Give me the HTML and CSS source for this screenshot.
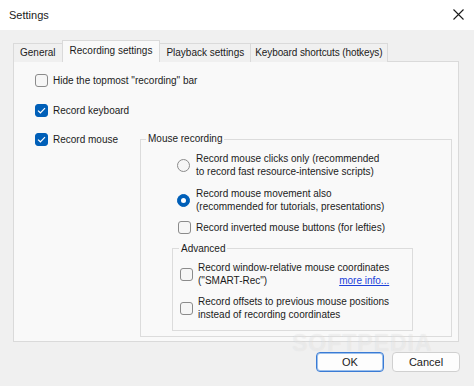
FILE: index.html
```html
<!DOCTYPE html>
<html>
<head>
<meta charset="utf-8">
<link rel="stylesheet" href="styles.css">
</head>
<body>
<div class="window">
  <div class="titlebar">
    <span class="title">Settings</span>
    <svg class="close" width="11" height="11" viewBox="0 0 11 11"><path d="M0.5 0.5 L10.5 10.5 M10.5 0.5 L0.5 10.5" stroke="#1a1a1a" stroke-width="1.1" fill="none"/></svg>
  </div>
  <div class="main">
    <div class="tabs">
      <div class="tab">General</div>
      <div class="tab active">Recording settings</div>
      <div class="tab">Playback settings</div>
      <div class="tab last">Keyboard shortcuts (hotkeys)</div>
    </div>
    <div class="panel">
      <div class="row"><span class="cb"></span><span>Hide the topmost "recording" bar</span></div>
      <div class="row row2"><span class="cb checked"><svg width="9" height="7" viewBox="0 0 9 7"><path d="M1 3.6 L3.4 5.8 L8 1.2" stroke="#fff" stroke-width="1.2" fill="none"/></svg></span><span>Record keyboard</span></div>
      <div class="mouse-row">
        <div class="row mouse-label"><span class="cb checked"><svg width="9" height="7" viewBox="0 0 9 7"><path d="M1 3.6 L3.4 5.8 L8 1.2" stroke="#fff" stroke-width="1.2" fill="none"/></svg></span><span>Record mouse</span></div>
        <fieldset class="group">
          <legend class="group-legend">Mouse recording</legend>
          <div class="opt">
            <span class="radio"></span>
            <div class="txt">Record mouse clicks only (recommended<br>to record fast resource-intensive scripts)</div>
          </div>
          <div class="opt opt2">
            <span class="radio on"></span>
            <div class="txt">Record mouse movement also<br>(recommended for tutorials, presentations)</div>
          </div>
          <div class="opt opt3">
            <span class="cb"></span>
            <div class="txt">Record inverted mouse buttons (for lefties)</div>
          </div>
          <fieldset class="adv">
            <legend class="adv-legend">Advanced</legend>
            <div class="opt">
              <span class="cb"></span>
              <div class="txt fit">
                <div>Record window-relative mouse coordinates</div>
                <div class="line2"><span>("SMART-Rec")</span><a class="link">more info...</a></div>
              </div>
            </div>
            <div class="opt opt2b">
              <span class="cb"></span>
              <div class="txt">Record offsets to previous mouse positions<br>instead of recording coordinates</div>
            </div>
          </fieldset>
        </fieldset>
      </div>
    </div>
    <div class="buttons">
      <div class="btn ok">OK</div>
      <div class="btn">Cancel</div>
    </div>
    <span class="watermark">SOFTPEDIA</span>
  </div>
</div>
</body>
</html>
```
FILE: styles.css
```css
html, body {
  margin: 0;
  padding: 0;
}
body {
  width: 474px;
  height: 386px;
  overflow: hidden;
  background: #f0f0f0;
  font-family: "Liberation Sans", Arial, sans-serif;
  font-size: 10px;
  color: #1b1b1b;
}
.window {
  position: relative;
  height: 386px;
}
.titlebar {
  height: 30px;
  background: #ffffff;
  display: flex;
  align-items: center;
  justify-content: space-between;
  padding: 0 10px 0 9px;
}
.title {
  font-size: 11px;
  color: #1a1a1a;
}
.close {
  margin-top: -2px;
}
.main {
  padding: 11px 15px 0 13px;
}
.tabs {
  display: flex;
  align-items: flex-end;
  height: 21px;
  margin-bottom: -1px;
  position: relative;
  z-index: 1;
}
.tab {
  height: 18px;
  line-height: 18px;
  padding: 0 6px;
  border: 1px solid #dadada;
  border-bottom: none;
  margin-right: -1px;
  background: #f0f0f0;
  color: #1b1b1b;
  white-space: nowrap;
}
.tab.last {
  padding: 0 4px;
  letter-spacing: -0.1px;
}
.tab.active {
  height: 21px;
  line-height: 20px;
  padding: 0 7px;
  background: #f9f9f9;
  position: relative;
  z-index: 2;
}
.panel {
  box-sizing: border-box;
  height: 281px;
  border: 1px solid #dadada;
  background: #f9f9f9;
  padding: 9px 6px 0 21px;
}
.row {
  display: flex;
  align-items: center;
  height: 18px;
  gap: 5px;
}
.row2 {
  margin-top: 12px;
}
.cb {
  flex: 0 0 auto;
  width: 11px;
  height: 11px;
  border: 1px solid #8b8b8b;
  border-radius: 3px;
  background: #f6f6f6;
  display: flex;
  align-items: center;
  justify-content: center;
}
.cb.checked {
  background: #005fb8;
  border-color: #005fb8;
}
.mouse-row {
  display: flex;
  align-items: flex-start;
  margin-top: 11px;
}
.mouse-label {
  flex: 0 0 105px;
}
.group {
  flex: 1;
  margin: 0;
  padding: 4px 0 5px 0;
  border: 1px solid #dcdcdc;
  min-width: 0;
}
.group-legend {
  margin-left: 5px;
  padding: 0 2px;
  line-height: 18px;
}
.group > .opt {
  margin-left: 36px;
}
.opt {
  display: grid;
  grid-template-columns: 13px auto;
  column-gap: 6px;
  align-items: center;
  justify-content: start;
}
.group > .opt2 {
  margin-top: 9px;
}
.group > .opt3 {
  margin-top: 8px;
}
.opt .cb {
  margin-left: 1px;
}
.txt {
  line-height: 13px;
}
.fit .line2 {
  display: flex;
  justify-content: space-between;
}
.link {
  color: #1c3fd9;
  text-decoration: underline;
  cursor: pointer;
}
.radio {
  width: 11px;
  height: 11px;
  border: 1px solid #8b8b8b;
  border-radius: 50%;
  background: #f6f6f6;
  position: relative;
}
.radio.on {
  background: #005fb8;
  border-color: #005fb8;
}
.radio.on::after {
  content: "";
  position: absolute;
  left: 3px;
  top: 3px;
  width: 5px;
  height: 5px;
  border-radius: 50%;
  background: #ffffff;
}
.adv {
  margin: 8px 38px 0 31px;
  padding: 6px 0 9px 0;
  border: 1px solid #dcdcdc;
  min-width: 0;
}
.adv-legend {
  margin-left: 6px;
  padding: 0 2px;
  line-height: 13px;
}
.adv > .opt {
  margin-left: 6px;
}
.adv > .opt2b {
  margin-top: 8px;
}
.buttons {
  display: flex;
  justify-content: flex-end;
  gap: 8px;
  margin-top: 10px;
  margin-right: -1px;
}
.btn {
  width: 66px;
  height: 18px;
  line-height: 18px;
  text-align: center;
  border: 1px solid #d0d0d0;
  border-radius: 4px;
  background: #fdfdfd;
  font-size: 11px;
  color: #1b1b1b;
}
.btn.ok {
  border-color: #3a7bd5;
  box-shadow: inset 0 0 0 1px #9cc0ec;
}
.watermark {
  position: absolute;
  left: 292px;
  top: 333px;
  font-size: 23px;
  line-height: 20px;
  height: 20px;
  font-weight: bold;
  letter-spacing: 1px;
  color: rgba(255, 255, 255, 0.35);
  text-shadow: 0 0 1px rgba(0, 0, 0, 0.08);
  pointer-events: none;
}
```
